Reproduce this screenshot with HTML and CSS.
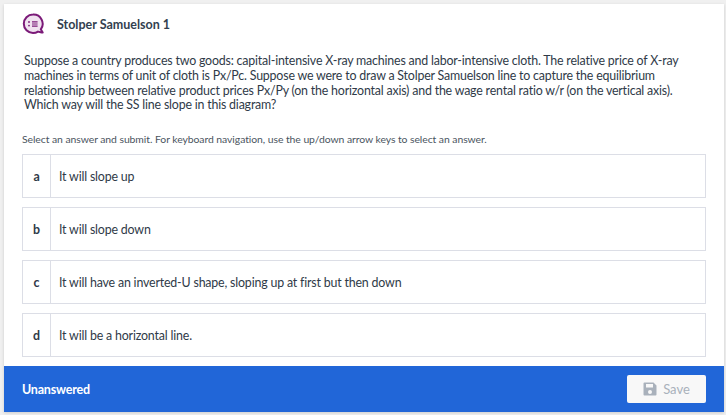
FILE: index.html
```html
<!DOCTYPE html>
<html lang="en">
<head>
<meta charset="utf-8">
<title>Stolper Samuelson 1</title>
<link rel="stylesheet" href="styles.css">
</head>
<body>
<main class="card">
  <header class="head">
    <svg class="quiz-icon" width="22" height="22" viewBox="0 0 22 22" aria-hidden="true">
      <path d="M11 1.600a9.200 9.200 0 1 0 0 18.400c2 0 3.600-.5 5-1.400l3.700.9h1l-1.900-3.200A9.200 9.200 0 0 0 11 1.600z" fill="#f0e2f0" stroke="#7b1a78" stroke-width="2" stroke-linejoin="round"/>
      <path d="M10 8.800h5.600M10 11h5.600M10 13.200h5.600" stroke="#7b1a78" stroke-width="1.200" fill="none"/>
      <circle cx="7" cy="9" r=".9" fill="#7b1a78"/>
      <circle cx="7" cy="12.600" r=".9" fill="#7b1a78"/>
    </svg>
    <h1 class="title">Stolper Samuelson 1</h1>
  </header>
  <p class="question">Suppose a country produces two goods: capital-intensive X-ray machines and labor-intensive cloth. The relative price of X-ray machines in terms of unit of cloth is Px/Pc. Suppose we were to draw a Stolper Samuelson line to capture the equilibrium relationship between relative product prices Px/Py (on the horizontal axis) and the wage rental ratio w/r (on the vertical axis). Which way will the SS line slope in this diagram?</p>
  <p class="hint">Select an answer and submit. For keyboard navigation, use the up/down arrow keys to select an answer.</p>
  <ul class="options">
    <li class="option"><span class="letter">a</span><span class="answer">It will slope up</span></li>
    <li class="option"><span class="letter">b</span><span class="answer">It will slope down</span></li>
    <li class="option"><span class="letter">c</span><span class="answer">It will have an inverted-U shape, sloping up at first but then down</span></li>
    <li class="option"><span class="letter">d</span><span class="answer">It will be a horizontal line.</span></li>
  </ul>
  <footer class="bar">
    <span class="status">Unanswered</span>
    <button class="save" type="button" disabled>
      <svg width="14" height="14" viewBox="0 0 14 14" aria-hidden="true"><path fill-rule="evenodd" d="M1.500 0.500h9l3 3v9a1 1 0 0 1-1 1h-11a1 1 0 0 1-1-1v-11a1 1 0 0 1 1-1zM3 2v3.500h7V2zM7 8a2 2 0 1 0 0 4 2 2 0 0 0 0-4z" fill="#a9b1bb"/></svg>
      <span>Save</span>
    </button>
  </footer>
</main>
</body>
</html>
```
FILE: styles.css
```css
* { box-sizing: border-box; }
html, body { height: 100%; }
body {
  margin: 0;
  padding: 4px 2px 3px 4px;
  background: #f0f0f0;
  font-family: "Lato", "Noto Sans", sans-serif;
  color: #2f3a48;
}
.card {
  display: flex;
  flex-direction: column;
  height: 408px;
  background: #fff;
  box-shadow: 0 1px 3px rgba(0,0,0,.15);
}
.head {
  display: flex;
  align-items: center;
  gap: 13px;
  padding: 0 18px;
  height: 40px;
}
.title {
  margin: 0;
  font-size: 12.500px;
  font-weight: 700;
  color: #333f4f;
}
.question {
  margin: 10px 0 0 20px;
  font-size: 12.400px;
  letter-spacing: -.19px;
  line-height: 14.800px;
  width: 660px;
}
.hint {
  margin: 20px 18px 0;
  font-size: 10.400px;
  letter-spacing: -.06px;
  line-height: 13px;
  color: #4a5460;
}
.options {
  list-style: none;
  margin: 8px 18px 0;
  padding: 0;
  display: flex;
  flex-direction: column;
  gap: 9px;
}
.option {
  display: flex;
  height: 44px;
  border: 1px solid #dcdee6;
  font-size: 12.400px;
  letter-spacing: -.18px;
  align-items: stretch;
}
.letter {
  width: 28px;
  display: flex;
  align-items: center;
  justify-content: center;
  border-right: 1px solid #dcdee6;
  font-weight: 700;
}
.answer {
  display: flex;
  align-items: center;
  padding-left: 8px;
}
.bar {
  margin-top: auto;
  height: 46px;
  background: #2166d8;
  display: flex;
  align-items: center;
  justify-content: space-between;
  padding: 0 18px;
}
.status {
  color: #fff;
  font-size: 12.500px;
  letter-spacing: -.2px;
  font-weight: 700;
}
.save {
  width: 79px;
  height: 28px;
  border: 0;
  border-radius: 2px;
  background: #f8f8f8;
  color: #a9b1bb;
  display: flex;
  align-items: center;
  justify-content: center;
  gap: 6px;
  font: 400 13px "Lato", sans-serif;
}
```
